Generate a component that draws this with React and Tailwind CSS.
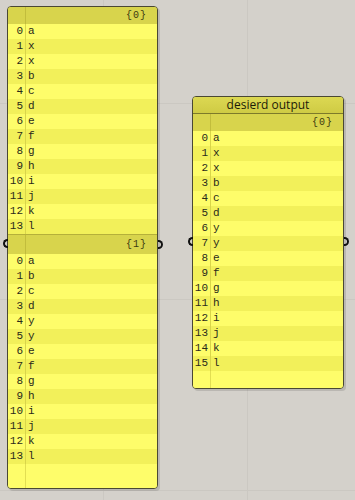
import React from "react";

const listA = ["a", "x", "x", "b", "c", "d", "e", "f", "g", "h", "i", "j", "k", "l"];
const listB = ["a", "b", "c", "d", "y", "y", "e", "f", "g", "h", "i", "j", "k", "l"];
const output = ["a", "x", "x", "b", "c", "d", "y", "y", "e", "f", "g", "h", "i", "j", "k", "l"];

const mono = { fontFamily: '"Liberation Mono", "DejaVu Sans Mono", monospace' };

function BranchHeader({ label, tall }) {
  return (
    <div className={`flex bg-[#d8d44c] ${tall ? "h-[19px]" : "h-[17px]"}`}>
      <div className="w-[18px] border-r border-[#c2bd3c]" />
      <div
        className={`flex-1 text-right pr-[10px] text-[10px] text-[#3d3a10] tracking-[1px] ${
          tall ? "leading-[19px]" : "leading-[17px]"
        }`}
        style={mono}
      >
        {label}
      </div>
    </div>
  );
}

function Row({ i, v }) {
  return (
    <div className={`flex h-[15px] ${i % 2 === 0 ? "bg-[#fefd6a]" : "bg-[#f2f05a]"}`}>
      <div
        className="w-[18px] border-r border-[#d9d54a] text-right pr-[2px] text-[11px] leading-[15px] text-[#2a2a1a]"
        style={mono}
      >
        {i}
      </div>
      <div className="pl-[2px] text-[11px] leading-[15px] text-[#2a2a1a]" style={mono}>
        {v}
      </div>
    </div>
  );
}

function Filler({ h }) {
  return (
    <div className="flex bg-[#fefd6a]" style={{ height: h }}>
      <div className="w-[18px] border-r border-[#e2de52]" />
    </div>
  );
}

function Grip({ side, top }) {
  return (
    <div
      className={`absolute w-[5px] h-[9px] border-[2px] border-[#111] ${
        side === "left"
          ? "left-[-5px] rounded-l-full border-r-0"
          : "right-[-6px] rounded-r-full border-l-0"
      }`}
      style={{ top }}
    />
  );
}

export default function App() {
  return (
    <div className="relative w-[355px] h-[500px] overflow-hidden bg-[#d4d1cb]">
      {/* canvas grid */}
      <div className="absolute left-[103px] top-0 h-full w-px bg-[#cbc8c2]" />
      <div className="absolute left-[247px] top-0 h-full w-px bg-[#cbc8c2]" />
      <div className="absolute left-0 top-[103px] w-full h-px bg-[#cbc8c2]" />
      <div className="absolute left-0 top-[299px] w-full h-px bg-[#cbc8c2]" />
      <div className="absolute left-0 top-[490px] w-full h-px bg-[#cbc8c2]" />

      {/* input panel with two branches */}
      <div className="absolute left-[7px] top-[6px] w-[151px] h-[483px] rounded-[4px] border border-[#4a4834] bg-[#fefd6a] shadow-[2px_2px_0_rgba(0,0,0,0.12)]">
        <div className="rounded-[3px] overflow-hidden h-full flex flex-col">
          <BranchHeader label="{0}" />
          {listA.map((v, i) => (
            <Row key={"a" + i} i={i} v={v} />
          ))}
          <div className="border-t border-[#b5b03a]">
            <BranchHeader label="{1}" tall />
          </div>
          {listB.map((v, i) => (
            <Row key={"b" + i} i={i} v={v} />
          ))}
          <Filler h={28} />
        </div>
        <Grip side="left" top={232} />
        <Grip side="right" top={233} />
      </div>

      {/* result panel */}
      <div className="absolute left-[192px] top-[96px] w-[152px] h-[293px] rounded-[4px] border border-[#4a4834] bg-[#fefd6a] shadow-[2px_2px_0_rgba(0,0,0,0.12)]">
        <div className="rounded-[3px] overflow-hidden h-full flex flex-col">
          <div
            className="h-[17px] bg-gradient-to-b from-[#dcd852] to-[#cfcb44] border-b border-[#7d7a2a] text-center text-[12px] leading-[16px] text-[#1c1b08]"
            style={{ fontFamily: '"Open Sans", "Noto Sans", sans-serif' }}
          >
            desierd output
          </div>
          <BranchHeader label="{0}" />
          {output.map((v, i) => (
            <Row key={"o" + i} i={i} v={v} />
          ))}
          <Filler h={20} />
        </div>
        <Grip side="left" top={140} />
        <Grip side="right" top={140} />
      </div>
    </div>
  );
}
